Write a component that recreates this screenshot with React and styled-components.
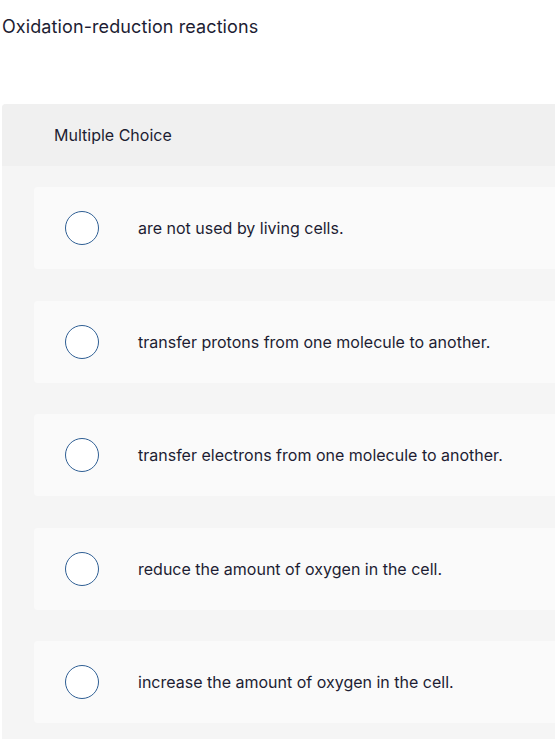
import React from "react";
import styled, { createGlobalStyle } from "styled-components";

const GlobalStyle = createGlobalStyle`
  html, body {
    margin: 0;
    padding: 0;
    background: #ffffff;
    overflow: hidden;
  }
  body {
    font-family: Inter, "Noto Sans", sans-serif;
    color: #1d1d33;
  }
`;

const Page = styled.div`
  padding: 14px 0 0 2px;
`;

const Title = styled.h1`
  margin: 0;
  font-size: 18px;
  font-weight: 400;
  line-height: 26px;
  letter-spacing: 0.1px;
  color: #1d1d33;
`;

const Panel = styled.section`
  margin-top: 64px;
  background: #f5f5f5;
  border-radius: 4px 0 0 0;
  overflow: hidden;
`;

const PanelHeader = styled.div`
  height: 62px;
  background: #f0f0f0;
  display: flex;
  align-items: center;
  padding-left: 52px;
  font-size: 16px;
  color: #1d1d33;
`;

const Choices = styled.div`
  display: flex;
  flex-direction: column;
  gap: 31.5px;
  padding: 21px 0 30px 32px;
`;

const Choice = styled.label`
  height: 82px;
  background: #fafafa;
  border-radius: 4px 0 0 4px;
  display: flex;
  align-items: center;
  padding-left: 31px;
  cursor: pointer;
`;

const Radio = styled.span`
  width: 34px;
  height: 34px;
  box-sizing: border-box;
  border-radius: 50%;
  border: 1.5px solid #2f5f94;
  background: #ffffff;
  flex-shrink: 0;
`;

const ChoiceText = styled.span`
  margin-left: 39px;
  font-size: 16px;
  color: #1d1d33;
`;

const options = [
  "are not used by living cells.",
  "transfer protons from one molecule to another.",
  "transfer electrons from one molecule to another.",
  "reduce the amount of oxygen in the cell.",
  "increase the amount of oxygen in the cell.",
];

export default function App() {
  return (
    <>
      <GlobalStyle />
      <Page>
        <Title>Oxidation-reduction reactions</Title>
        <Panel>
          <PanelHeader>Multiple Choice</PanelHeader>
          <Choices>
            {options.map((text) => (
              <Choice key={text}>
                <Radio />
                <ChoiceText>{text}</ChoiceText>
              </Choice>
            ))}
          </Choices>
        </Panel>
      </Page>
    </>
  );
}
